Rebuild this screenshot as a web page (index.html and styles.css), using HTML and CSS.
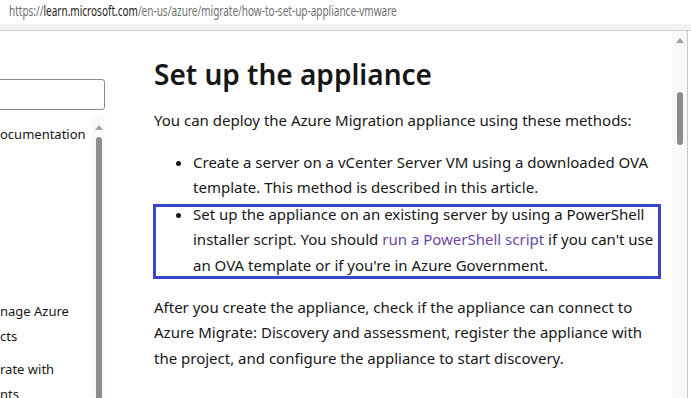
FILE: index.html
```html
<!DOCTYPE html>
<html lang="en">
<head>
<meta charset="utf-8">
<title>Set up the appliance</title>
<link rel="stylesheet" href="styles.css">
</head>
<body>
<div class="urlbar"><span class="url-text"><span class="url-dim">https://</span><span class="url-host">learn.microsoft.com</span><span class="url-dim">/en-us/azure/migrate/how-to-set-up-appliance-vmware</span></span></div>
<div class="band"></div>
<div class="page">
  <aside class="sidebar">
    <div class="search"></div>
    <div class="toc">
      <ul class="toc-list">
        <li class="toc-item">ocumentation</li>
        <li class="toc-item toc-gap">nage Azure<br>cts</li>
        <li class="toc-item">rate with<br>nts</li>
      </ul>
      <div class="mini-scroll">
        <div class="arrow-up"></div>
        <div class="mini-thumb"></div>
      </div>
    </div>
  </aside>
  <main class="content">
    <h2 class="title">Set up the appliance</h2>
    <p class="para">You can deploy the Azure Migration appliance using these methods:</p>
    <ul class="methods">
      <li>Create a server on a vCenter Server VM using a downloaded OVA template. This method is described in this article.</li>
      <li class="highlight">Set up the appliance on an existing server by using a PowerShell installer script. You should <a class="link" href="#">run a PowerShell script</a> if you can't use an OVA template or if you're in Azure Government.</li>
    </ul>
    <p class="para">After you create the appliance, check if the appliance can connect to Azure Migrate: Discovery and assessment, register the appliance with the project, and configure the appliance to start discovery.</p>
  </main>
  <div class="scrollbar">
    <div class="arrow-up"></div>
    <div class="thumb"></div>
  </div>
</div>
</body>
</html>
```
FILE: styles.css
```css
html, body {
  margin: 0;
  padding: 0;
  background: #ffffff;
  overflow: hidden;
}
body {
  width: 691px;
  height: 398px;
  font-family: "Noto Sans", "Open Sans", sans-serif;
  color: #171717;
}
.urlbar {
  height: 24px;
  line-height: 22px;
  padding-left: 9px;
  font-size: 14px;
  white-space: nowrap;
  background: #ffffff;
}
.url-text {
  display: inline-block;
  transform: scaleX(0.715);
  transform-origin: left center;
}
.url-dim { color: #6f6f6f; }
.url-host { color: #1c1c1c; }
.band {
  height: 6px;
  background: #f2f2f2;
  border-bottom: 1px solid #cfcfcf;
}
.page {
  display: flex;
  height: 367px;
}
.sidebar {
  width: 140px;
  flex: none;
  overflow: hidden;
}
.search {
  margin: 48px 0 0 -10px;
  width: 113px;
  height: 29px;
  border: 1px solid #8a8a8a;
  border-radius: 3px;
}
.toc {
  display: flex;
  margin-top: 4px;
  height: 300px;
}
.toc-list {
  list-style: none;
  margin: 0;
  padding: 5px 0 0;
  width: 92px;
  font-size: 13px;
  line-height: 25px;
  white-space: nowrap;
  overflow: hidden;
}
.toc-item {
  padding-top: 3px;
}
.toc-gap {
  margin-top: 149px;
}
.toc-item + .toc-item:not(.toc-gap) {
  margin-top: 5px;
}
.mini-scroll {
  width: 13px;
  background: #fafafa;
  display: flex;
  flex-direction: column;
  align-items: center;
}
.arrow-up {
  width: 0;
  height: 0;
  border-left: 4px solid transparent;
  border-right: 4px solid transparent;
  border-bottom: 5px solid #a3a3a3;
}
.mini-scroll .arrow-up {
  margin-top: 11px;
}
.mini-thumb {
  margin-top: 7px;
  width: 6px;
  flex: 1;
  background: #8e8e8e;
  border-radius: 3px 3px 0 0;
}
.content {
  flex: 1;
  padding: 0 13px 0 14px;
  overflow: hidden;
}
.title {
  margin: 25px 0 0;
  font-size: 28px;
  line-height: 36px;
  font-weight: 600;
  color: #161616;
}
.para {
  margin: 16px 0 0;
  font-size: 15px;
  line-height: 25.6px;
}
.methods {
  margin: 16px 0 0;
  padding-left: 39px;
  font-size: 15px;
  line-height: 25.6px;
}
.methods li + li {
  margin-top: 1px;
}
.highlight {
  position: relative;
}
.highlight::after {
  content: "";
  position: absolute;
  left: -40px;
  right: -2px;
  top: 2px;
  bottom: 0;
  border: 3px solid #3a45c7;
}
.link {
  color: #6a48a6;
  text-decoration: none;
}
.scrollbar {
  width: 15px;
  flex: none;
  background: #f8f8f8;
  border-right: 1px solid #c9c9c9;
  margin-right: 3px;
  display: flex;
  flex-direction: column;
  align-items: center;
}
.scrollbar .arrow-up {
  margin-top: 7px;
}
.thumb {
  margin-top: 49px;
  width: 6px;
  height: 53px;
  background: #8c8c8c;
  border-radius: 3px;
}
```
